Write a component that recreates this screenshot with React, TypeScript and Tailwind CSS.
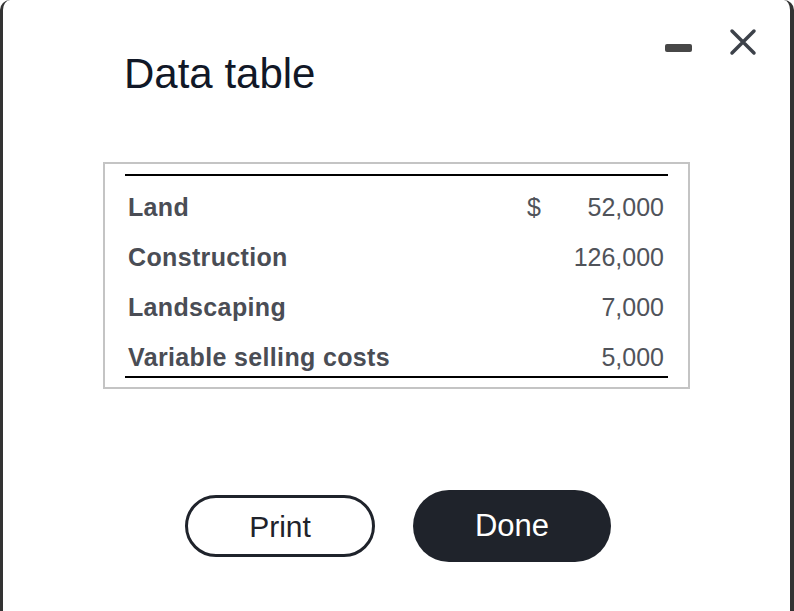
const rows = [
  { label: "Land", sign: "$", value: "52,000" },
  { label: "Construction", sign: "", value: "126,000" },
  { label: "Landscaping", sign: "", value: "7,000" },
  { label: "Variable selling costs", sign: "", value: "5,000" },
];

export default function App() {
  return (
    <div className="h-[611px] w-[794px] overflow-hidden bg-white font-['Liberation_Sans',Arial,sans-serif]">
      <div className="flex h-full flex-col rounded-t-[10px] border-l-[3px] border-r-[4px] border-[#333]">
        {/* Header */}
        <div className="flex items-start justify-between">
          <h1 className="pl-[121px] pt-[53px] text-[42px] leading-[42px] text-[#111827]">Data table</h1>
          <div className="flex items-start gap-[37px] pr-[33px] pt-[28px]">
            <span className="mt-[16px] block h-[8px] w-[27px] rounded-[2px] bg-[#474747]" />
            <svg width="28" height="28" viewBox="0 0 28 28" fill="none">
              <path d="M3 3 L25 25 M25 3 L3 25" stroke="#3d424a" strokeWidth="3.5" strokeLinecap="round" />
            </svg>
          </div>
        </div>

        {/* Table */}
        <div className="ml-[100px] mt-[67px] w-[587px] border-2 border-[#c4c4c4] px-[20px] pb-[9px] pt-[10px]">
          <div className="flex flex-col gap-[20px] border-y-2 border-black pb-[4px] pl-[3px] pr-[4px] pt-[16px]">
            {rows.map((r) => (
              <div key={r.label} className="flex h-[30px] items-center text-[25px] leading-[30px]">
                <span className="flex-1 font-bold tracking-[0.35px] text-[#4a4d55]">{r.label}</span>
                <span className="w-[17px] text-[#50535a]">{r.sign}</span>
                <span className="w-[120px] text-right text-[#50535a]">{r.value}</span>
              </div>
            ))}
          </div>
        </div>

        {/* Buttons */}
        <div className="mt-[101px] flex items-center justify-center gap-[38px] pl-[3px]">
          <button className="h-[62px] w-[190px] rounded-full border-[3px] border-[#1f232b] bg-white text-[30px] text-[#1f232b]">
            Print
          </button>
          <button className="h-[72px] w-[198px] rounded-full bg-[#1f232b] text-[31px] text-white">Done</button>
        </div>
      </div>
    </div>
  );
}
